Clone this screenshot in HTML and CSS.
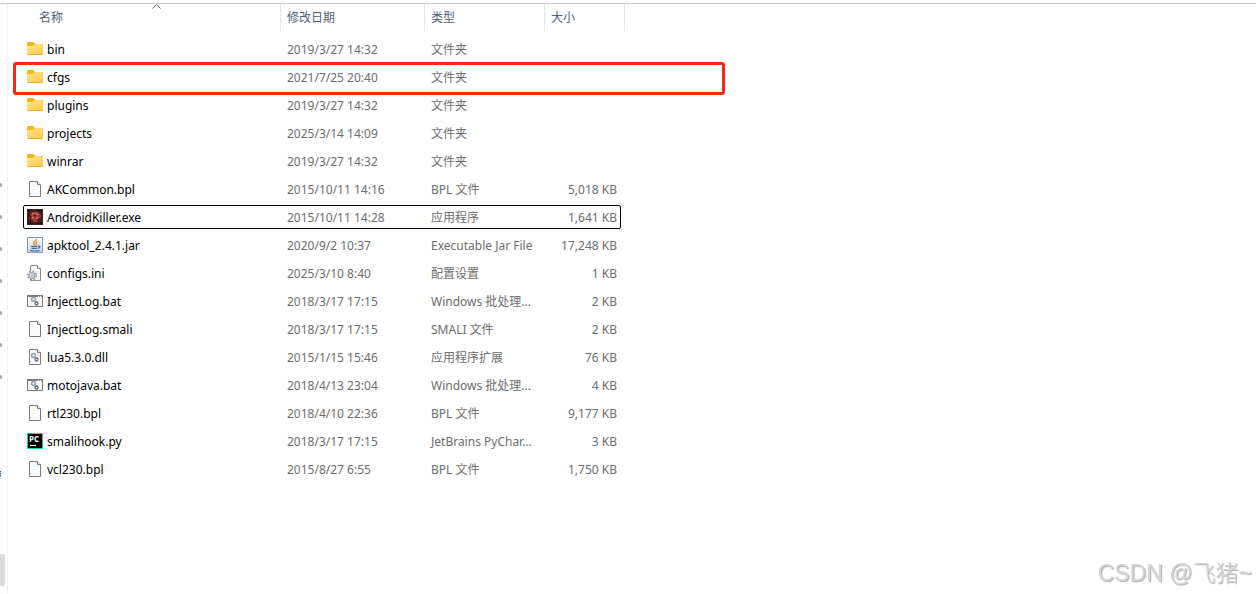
FILE: index.html
```html
<!DOCTYPE html>
<html lang="zh-CN">
<head>
  <meta charset="UTF-8">
  <title>AndroidKiller</title>
  <link rel="stylesheet" href="styles.css">
</head>
<body>

<!-- icon set -->
<svg class="defs" width="0" height="0" aria-hidden="true">
  <defs>
    <linearGradient id="folder-front" x1="0" y1="0" x2="1" y2="1">
      <stop offset="0" stop-color="#ffe596"/>
      <stop offset="1" stop-color="#ffc83d"/>
    </linearGradient>
    <linearGradient id="java-bg" x1="0" y1="0" x2="0" y2="1">
      <stop offset="0" stop-color="#fdfdfe"/>
      <stop offset="1" stop-color="#c3d3e2"/>
    </linearGradient>
    <radialGradient id="killer-bg">
      <stop offset="0" stop-color="#b8483c"/>
      <stop offset="0.6" stop-color="#6b2420"/>
      <stop offset="1" stop-color="#241416"/>
    </radialGradient>
  </defs>
  <symbol id="i-folder" viewBox="0 0 16 16">
    <path d="M0 2.500Q0 1 1.500 1H6.500l1.500 2h6.500Q16 2 16 3.500V8H0z" fill="#f5b315"/>
    <path d="M0 5h6l2-2h7q1 0 1 1v9q0 1-1 1H1q-1 0-1-1z" fill="url(#folder-front)"/>
    <path d="M0.500 13.500h15" stroke="#e5ac30"/>
  </symbol>
  <symbol id="i-file" viewBox="0 0 16 16">
    <path d="M2.500 0.500h8l3 3v12h-11z" fill="#fafafa" stroke="#7b7b7b"/>
    <path d="M10.500 0.500v3h3" fill="#fff" stroke="#7b7b7b"/>
  </symbol>
  <symbol id="i-gears" viewBox="0 0 16 16">
    <circle cx="6.500" cy="6.500" r="2" fill="#dfe6ec" stroke="#9aa5af" stroke-width="1.500"/>
    <circle cx="9.500" cy="10.500" r="1.500" fill="#fff" stroke="#5f6a75" stroke-width="1.300"/>
  </symbol>
  <symbol id="i-dll" viewBox="0 0 16 16">
    <use href="#i-file"/>
    <use href="#i-gears"/>
  </symbol>
  <symbol id="i-bat" viewBox="0 0 16 16">
    <path d="M0.500 2.500h15v11h-15z" fill="#f7f7f7" stroke="#7b7b7b"/>
    <path d="M0 3h16" stroke="#7b7b7b" stroke-width="2"/>
    <path d="M11 3.500h1M13 3.500h1" stroke="#fff"/>
    <use href="#i-gears"/>
  </symbol>
  <symbol id="i-ini" viewBox="0 0 16 16">
    <path d="M3.500 0.500h7l3 3v12h-10z" fill="#f6f6f6" stroke="#8e8e8e"/>
    <path d="M10.500 0.500v3h3" fill="#fff" stroke="#8e8e8e"/>
    <circle cx="5" cy="10.500" r="4.200" fill="none" stroke="#8f979e" stroke-width="1.600" stroke-dasharray="1.650 1.650"/>
    <circle cx="5" cy="10.500" r="3" fill="#e3e6e9" stroke="#9aa1a8" stroke-width="1.200"/>
    <circle cx="5" cy="10.500" r="1" fill="#fff" stroke="#8f979e" stroke-width="0.800"/>
  </symbol>
  <symbol id="i-jar" viewBox="0 0 16 16">
    <path d="M0.500 0.500h15v15h-15z" fill="url(#java-bg)" stroke="#7f9bb5"/>
    <path d="M9.500 2C10 4 6 4.500 6.500 6.200 6.700 7 8 7.300 7.500 8.300M10.500 4.500C8.500 5.500 9.800 6.300 8.800 7.800" fill="none" stroke="#e8832a" stroke-width="1.300"/>
    <path d="M4 9.300h6.500M4.500 11.300h5.500M3 13.500q4.500 1 9.500 0M11 9q2.500-.2 1.800 1.100-.4.900-2 1.200" fill="none" stroke="#3f6c9c" stroke-width="1.200"/>
  </symbol>
  <symbol id="i-killer" viewBox="0 0 16 16">
    <path d="M0 0h16v16H0z" fill="url(#killer-bg)"/>
    <path d="M0.500 0.500h15v15h-15z" fill="none" stroke="#3c2424"/>
    <path d="M3 5l3-2 5 0 3 3-1 4-3 3-3 0-3-3z" fill="#9c3a33"/>
    <path d="M5 5l2-1M8 4l3 2M5 8l2 1M11 8l-2 2" stroke="#e0988a"/>
    <path d="M7 6l2 1M10 11l3-1M4 11l2 1M3 6l1 2" stroke="#2c0e0e"/>
  </symbol>
</svg>

<div class="explorer">
  <div class="rail">
    <ul class="pins">
      <li></li><li></li><li></li><li></li><li></li><li></li><li></li>
    </ul>
    <div class="rail-mark"></div>
    <div class="scroll-thumb"></div>
  </div>

  <main class="content">
    <table class="files">
      <colgroup>
        <col class="col-name"><col class="col-date"><col class="col-type"><col class="col-size">
      </colgroup>
      <thead>
        <tr>
          <th>名称<svg class="sort" viewBox="0 0 9 5"><path d="M0.500 4.500l4-4 4 4" fill="none" stroke="#666"/></svg></th>
          <th>修改日期</th>
          <th>类型</th>
          <th>大小</th>
        </tr>
      </thead>
      <tbody>
        <tr><td><svg class="icon"><use href="#i-folder"/></svg>bin</td><td>2019/3/27 14:32</td><td>文件夹</td><td></td></tr>
        <tr class="marked"><td><svg class="icon"><use href="#i-folder"/></svg>cfgs</td><td>2021/7/25 20:40</td><td>文件夹</td><td></td></tr>
        <tr><td><svg class="icon"><use href="#i-folder"/></svg>plugins</td><td>2019/3/27 14:32</td><td>文件夹</td><td></td></tr>
        <tr><td><svg class="icon"><use href="#i-folder"/></svg>projects</td><td>2025/3/14 14:09</td><td>文件夹</td><td></td></tr>
        <tr><td><svg class="icon"><use href="#i-folder"/></svg>winrar</td><td>2019/3/27 14:32</td><td>文件夹</td><td></td></tr>
        <tr><td><svg class="icon"><use href="#i-file"/></svg>AKCommon.bpl</td><td>2015/10/11 14:16</td><td>BPL 文件</td><td>5,018 KB</td></tr>
        <tr class="focused"><td><svg class="icon"><use href="#i-killer"/></svg>AndroidKiller.exe</td><td>2015/10/11 14:28</td><td>应用程序</td><td>1,641 KB</td></tr>
        <tr><td><svg class="icon"><use href="#i-jar"/></svg>apktool_2.4.1.jar</td><td>2020/9/2 10:37</td><td>Executable Jar File</td><td>17,248 KB</td></tr>
        <tr><td><svg class="icon"><use href="#i-ini"/></svg>configs.ini</td><td>2025/3/10 8:40</td><td>配置设置</td><td>1 KB</td></tr>
        <tr><td><svg class="icon"><use href="#i-bat"/></svg>InjectLog.bat</td><td>2018/3/17 17:15</td><td>Windows 批处理...</td><td>2 KB</td></tr>
        <tr><td><svg class="icon"><use href="#i-file"/></svg>InjectLog.smali</td><td>2018/3/17 17:15</td><td>SMALI 文件</td><td>2 KB</td></tr>
        <tr><td><svg class="icon"><use href="#i-dll"/></svg>lua5.3.0.dll</td><td>2015/1/15 15:46</td><td>应用程序扩展</td><td>76 KB</td></tr>
        <tr><td><svg class="icon"><use href="#i-bat"/></svg>motojava.bat</td><td>2018/4/13 23:04</td><td>Windows 批处理...</td><td>4 KB</td></tr>
        <tr><td><svg class="icon"><use href="#i-file"/></svg>rtl230.bpl</td><td>2018/4/10 22:36</td><td>BPL 文件</td><td>9,177 KB</td></tr>
        <tr>
          <td><svg class="icon" viewBox="0 0 16 16"><path d="M0 0h16v16H0z" fill="#21d789"/><path d="M1 1h14v14H1z" fill="#000"/><text x="2" y="9" class="pc">PC</text><path d="M3 12.500h6" stroke="#fff"/></svg>smalihook.py</td>
          <td>2018/3/17 17:15</td><td>JetBrains PyChar...</td><td>3 KB</td>
        </tr>
        <tr><td><svg class="icon"><use href="#i-file"/></svg>vcl230.bpl</td><td>2015/8/27 6:55</td><td>BPL 文件</td><td>1,750 KB</td></tr>
      </tbody>
    </table>
  </main>
</div>

<div class="watermark">CSDN @飞猪~</div>

</body>
</html>
```

FILE: styles.css
```css
*,
*::before,
*::after {
  box-sizing: border-box;
}

body {
  margin: 0;
  padding-top: 3px;
  height: 100vh;
  overflow: hidden;
  background: #fff;
  color: #000;
  font-family: "Noto Sans", "Noto Sans CJK SC", sans-serif;
  font-size: 12px;
  line-height: 18px;
}

.defs {
  position: absolute;
}

.explorer {
  display: flex;
  height: 100%;
  border-top: 1px solid #c8c8c8;
}

/* sliver of the navigation pane */
.rail {
  width: 8px;
  flex-shrink: 0;
  display: flex;
  flex-direction: column;
  border-right: 1px solid #f2f2f2;
  padding-top: 179px;
}

.pins {
  list-style: none;
  margin: 0;
  padding: 0;
  display: flex;
  flex-direction: column;
  gap: 28px;
}

.pins li {
  width: 2px;
  height: 4px;
  background: #96a1ac;
  border-radius: 0 2px 2px 0;
}

.rail-mark {
  width: 1px;
  height: 6px;
  margin-top: 92px;
  background: repeating-linear-gradient(#1a5fb0 0 1px, #8cc8f5 1px 2px);
}

.scroll-thumb {
  width: 5px;
  height: 32px;
  margin-top: 77px;
  background: #d9d9d9;
  border-radius: 0 2px 2px 0;
}

.content {
  flex: 1;
  padding-left: 15px;
}

.files {
  width: 602px;
  table-layout: fixed;
  border-collapse: separate;
  border-spacing: 0;
}

.col-name { width: 258px; }
.col-date { width: 144px; }
.col-type { width: 120px; }
.col-size { width: 80px; }

.files th {
  position: relative;
  height: 27px;
  padding: 0 6px;
  border-right: 1px solid #e5e5e5;
  color: #4c607a;
  font-weight: normal;
  text-align: left;
}

.files th:first-child {
  padding-left: 16px;
}

.sort {
  position: absolute;
  top: 0;
  left: 50%;
  width: 9px;
  height: 5px;
}

.files tbody::before {
  content: "";
  display: block;
  height: 4px;
}

.files td {
  height: 28px;
  padding: 2px 0 0 6px;
  color: #6d6d6d;
  white-space: nowrap;
}

.files td:first-child {
  padding-left: 4px;
  color: #000;
}

.files td:last-child {
  padding-right: 8px;
  text-align: right;
}

.icon {
  width: 16px;
  height: 16px;
  margin-right: 4px;
  vertical-align: -3px;
}

.pc {
  font-family: "Open Sans", sans-serif;
  font-size: 8px;
  font-weight: bold;
  fill: #fff;
}

.marked,
.focused {
  position: relative;
}

.marked::after {
  content: "";
  position: absolute;
  top: -1px;
  left: -10px;
  width: 712px;
  height: 33px;
  border: 3px solid #fb2516;
  border-radius: 3px;
}

.focused::after {
  content: "";
  position: absolute;
  inset: 2px 4px 2px 0;
  border: 1px solid #000;
  border-radius: 2px;
}

.watermark {
  position: fixed;
  right: 4px;
  bottom: 5px;
  color: #d6d6d6;
  font-family: "Liberation Sans", "Noto Sans CJK SC", sans-serif;
  font-size: 23px;
  font-weight: 300;
  line-height: 32px;
  text-shadow: 1px 1px 1px #aaa;
}
```
